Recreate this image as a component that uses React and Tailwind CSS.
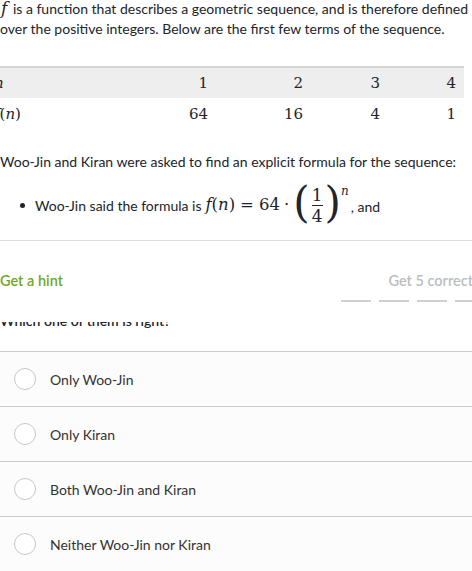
import React from 'react';

const sans = { fontFamily: 'Lato, "Open Sans", sans-serif' };

const M = ({ children, className = '' }) => (
  <span className={`italic ${className}`} style={{ fontFamily: '"DejaVu Serif", "Liberation Serif", serif' }}>
    {children}
  </span>
);

const N = ({ children, className = '' }) => (
  <span className={className} style={{ fontFamily: '"DejaVu Serif", "Liberation Serif", serif' }}>
    {children}
  </span>
);

const options = ['Only Woo-Jin', 'Only Kiran', 'Both Woo-Jin and Kiran', 'Neither Woo-Jin nor Kiran'];

const rows = [
  { label: <M>n</M>, values: ['1', '2', '3', '4'], bg: 'bg-[#eeeeee] h-[30px]' },
  { label: <><M>f</M><N>(</N><M>n</M><N>)</N></>, values: ['64', '16', '4', '1'], bg: 'h-[32px]' },
];

const colWidths = ['w-[102px]', 'w-[95px]', 'w-[77px]', 'w-[76px]'];

export default function App() {
  return (
    <div className="w-[472px] h-[571px] overflow-hidden bg-white text-[#21242c] flex flex-col" style={sans}>
      <div className="mt-[-2px] text-[14px] leading-[20px] whitespace-nowrap">
        <p>
          <M className="text-[17px] ml-[1px] mr-[2px]">f</M> is a function that describes a geometric sequence, and is therefore defined
        </p>
        <p>over the positive integers. Below are the first few terms of the sequence.</p>
      </div>

      <div className="mt-[27px] ml-[-16px] w-[480px] border-t-2 border-[#d6d6d6] text-[15px]">
        {rows.map((r, i) => (
          <div key={i} className={`flex items-center ${r.bg}`}>
            <div className="w-[130px] pl-[10px]">{r.label}</div>
            {r.values.map((v, j) => (
              <div key={j} className={`${colWidths[j]} text-right pr-[8px]`}><N>{v}</N></div>
            ))}
          </div>
        ))}
      </div>

      <p className="mt-[22px] text-[14px] leading-[20px] whitespace-nowrap">
        Woo-Jin and Kiran were asked to find an explicit formula for the sequence:
      </p>

      <div className="mt-[8px] h-[50px] flex items-center text-[14px] whitespace-nowrap">
        <span className="w-[5px] h-[5px] rounded-full bg-[#21242c] ml-[20px] mr-[10px]" />
        <span>Woo-Jin said the formula is</span>
        <span className="ml-[4px] flex items-center text-[16.5px]">
          <M>f</M><N>(</N><M>n</M><N>)</N>
          <N className="mx-[5px]">=</N>
          <N>64</N>
          <N className="mx-[4px]">·</N>
          <N className="text-[42px] leading-none font-light mt-[-5px]">(</N>
          <span className="flex flex-col items-center text-[17px] leading-[18px] mx-[2px]">
            <N>1</N>
            <span className="w-[11px] h-px bg-[#21242c] my-[1px]" />
            <N>4</N>
          </span>
          <N className="text-[42px] leading-none font-light mt-[-5px]">)</N>
          <M className="text-[12px] self-start mt-[-4px]">n</M>
        </span>
        <span className="ml-[2px] mt-[2px]">, and</span>
      </div>

      <div className="mt-[10px] border-t border-[#dddddd]" />

      <div className="h-[81px] flex flex-col">
        <div className="mt-[30px] flex items-center justify-between text-[14.5px] leading-[20px] font-semibold whitespace-nowrap">
          <span className="text-[#6ea827]">Get a hint</span>
          <span className="text-[#babec2] mr-[-1px]">Get 5 correct</span>
        </div>
        <div className="mt-[9px] flex justify-end gap-[8px] mr-[-13px]">
          <span className="w-[30px] h-[2px] bg-[#d0d0d0]" />
          <span className="w-[30px] h-[2px] bg-[#d0d0d0]" />
          <span className="w-[30px] h-[2px] bg-[#d0d0d0]" />
          <span className="w-[30px] h-[2px] bg-[#d0d0d0]" />
        </div>
      </div>

      <div className="h-[9px] overflow-hidden flex flex-col justify-end">
        <p className="text-[14px] leading-[20px] font-semibold whitespace-nowrap">Which one of them is right?</p>
      </div>

      <div className="mt-[20px] bg-[#fcfcfc]">
        {options.map((o) => (
          <div key={o} className="h-[55px] border-t border-[#cccccc] flex items-center">
            <span className="ml-[14px] w-[22px] h-[22px] rounded-full border border-[#c8c8c8] bg-white" />
            <span className="ml-[14px] text-[14px] text-[#333333]">{o}</span>
          </div>
        ))}
      </div>
    </div>
  );
}
